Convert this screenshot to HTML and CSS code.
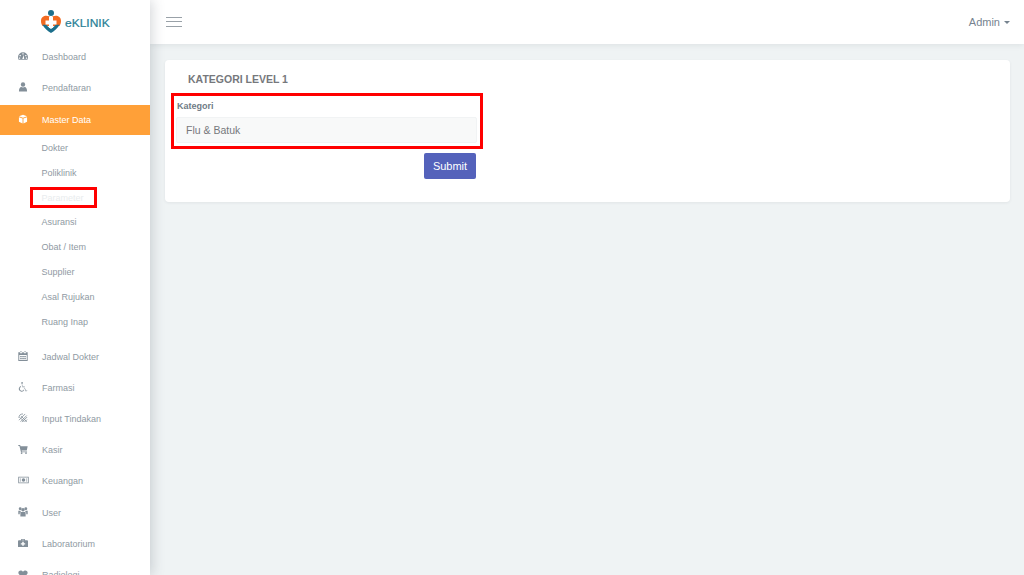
FILE: index.html
```html
<!DOCTYPE html>
<html lang="id">
<head>
<meta charset="utf-8">
<title>eKlinik</title>
<link rel="stylesheet" href="styles.css">
</head>
<body>
<div class="app">
  <aside class="sidebar">
    <div class="brand">
      <svg class="brand-mark" viewBox="0 0 20 23" width="20" height="23">
        <circle cx="10" cy="3" r="3" fill="#1c6f8c"/>
        <path d="M10 8C7.500 4.500 0 5 0 11c0 2 .6 3.600 1.600 5h16.800c1-1.400 1.600-3 1.600-5 0-6-7.500-6.500-10-3z" fill="#f26a21"/>
        <path d="M1.400 14.800C3.400 18.300 6.800 21.200 10 23c3.200-1.800 6.600-4.700 8.600-8.200h-3.800c-1.200 1.500-3 3-4.800 4.100-1.800-1.100-3.600-2.600-4.800-4.100z" fill="#1c6f8c"/>
        <path d="M8 7h4v3.500h3.500V14.500H12V18H8v-3.500H4.500V10.500H8z" fill="#fff"/>
      </svg>
      <span class="brand-name">eKLINIK</span>
    </div>
    <nav class="nav">
      <a class="nav-item"><svg class="nav-icon" viewBox="0 0 16 16"><path d="M8 2A8 8 0 0 0 0 10c0 1.500.4 2.800 1 4h14c.6-1.200 1-2.500 1-4a8 8 0 0 0-8-8zM7 3.500h2v2H7zM2.500 6.500h2v2h-2zm9 0h2v2h-2zM1.500 10.500h2v2h-2zm11 0h2v2h-2zM6.800 12.800l2.400-6.300.7 6.300z" fill-rule="evenodd"/></svg><span>Dashboard</span></a>
      <a class="nav-item"><svg class="nav-icon" viewBox="0 0 16 16"><circle cx="8" cy="4" r="3.500"/><path d="M1.500 15c0-4.500 1.500-6.800 3.800-7 1.500 1 3.900 1 5.400 0 2.300.2 3.800 2.500 3.800 7z"/></svg><span>Pendaftaran</span></a>
      <a class="nav-item active"><svg class="nav-icon" viewBox="0 0 16 16"><path d="M8 1 1.500 3.500 8 6l6.500-2.500zM1.500 5v7.500L7.300 15V7.300zm13 0L8.700 7.300V15l5.800-2.500z"/></svg><span>Master Data</span></a>
      <div class="subnav">
        <a class="sub-item">Dokter</a>
        <a class="sub-item">Poliklinik</a>
        <a class="sub-item current">Parameter</a>
        <a class="sub-item">Asuransi</a>
        <a class="sub-item">Obat / Item</a>
        <a class="sub-item">Supplier</a>
        <a class="sub-item">Asal Rujukan</a>
        <a class="sub-item">Ruang Inap</a>
      </div>
      <a class="nav-item"><svg class="nav-icon" viewBox="0 0 16 16"><path d="M4 0h1.500v2H4zm6.500 0H12v2h-1.500zM.5 2h2.800v1.500h3.400V2h2.600v1.500h3.400V2h2.800v14H.5zM2 6.500V14.500h12V6.500z" fill-rule="evenodd"/><path d="M3.500 8h2.500v2H3.500zm3.300 0h2.500v2H6.800zm3.200 0h2.500v2H10zM3.500 11h2.500v2H3.500zm3.300 0h2.500v2H6.800zm3.200 0h2.500v2H10z"/></svg><span>Jadwal Dokter</span></a>
      <a class="nav-item"><svg class="nav-icon" viewBox="0 0 16 16"><circle cx="6.500" cy="1.500" r="1.400"/><path d="M5.800 3.800h1.300v3.500h3.700v1.200H7zM4.800 6.500v1.300A3.300 3.300 0 1 0 9.300 12l.6 1.200A4.600 4.600 0 1 1 4.800 6.500zM10.800 9l2.200 4.800 1.500-.7.400.9-2.400 1.200L10 9.500z"/></svg><span>Farmasi</span></a>
      <a class="nav-item"><svg class="nav-icon" viewBox="0 0 16 16"><g class="lines" fill="none" stroke-width="1.300"><path d="M1.500 8A6.500 6.500 0 0 1 8 1.500M1.500 11.500 11.500 1.500M4 14 14 4M6.500 14.500l8-8M11 14l3.500-3.500M5 5l9 9M3 7l7 7"/></g></svg><span>Input Tindakan</span></a>
      <a class="nav-item"><svg class="nav-icon" viewBox="0 0 16 16"><path d="M.5 1.500h3l.5 2h11.500l-1.500 7H5.800l.3 1.300h8.400v1.400H4.800L2.300 3H.5z"/><circle cx="5.800" cy="14.500" r="1.400"/><circle cx="12.800" cy="14.500" r="1.400"/></svg><span>Kasir</span></a>
      <a class="nav-item"><svg class="nav-icon wide" viewBox="0 0 20 16"><path d="M.5 2h19v12H.5zM2 3.500v9h16v-9z" fill-rule="evenodd"/><circle cx="10" cy="8" r="3.200"/><path d="M3.500 5h2v6h-2zm11 0h2v6h-2z" opacity=".5"/></svg><span>Keuangan</span></a>
      <a class="nav-item"><svg class="nav-icon" viewBox="0 0 16 16"><circle cx="3.500" cy="2.800" r="2.300"/><circle cx="12.500" cy="2.800" r="2.300"/><circle cx="8" cy="4.500" r="2.800"/><path d="M.5 5.800h3l1.500 2.700H2.800v3H.5zm15 0h-3L11 8.500h2.200v3h2.300zM3.800 8h8.400v7H3.800z"/></svg><span>User</span></a>
      <a class="nav-item"><svg class="nav-icon" viewBox="0 0 16 16"><path d="M5 3.500V1.500h6v2h3.500A1.500 1.500 0 0 1 16 5v9.500H0V5a1.500 1.500 0 0 1 1.500-1.500zM6.300 3.500h3.400V2.800H6.300zM6.800 6v2.300H4.500v2h2.300v2.200h2.400v-2.200h2.300v-2H9.200V6z" fill-rule="evenodd"/></svg><span>Laboratorium</span></a>
      <a class="nav-item"><svg class="nav-icon" viewBox="0 0 16 16"><path d="M8 15 1.500 8.500C-.5 6 1 2.500 4.300 2.500 6 2.500 7.200 3.500 8 4.500c.8-1 2-2 3.700-2 3.300 0 4.800 3.500 2.800 6z"/></svg><span>Radiologi</span></a>
    </nav>
  </aside>
  <div class="main">
    <header class="topbar">
      <button class="burger" aria-label="Menu"><i></i><i></i><i></i></button>
      <div class="user">Admin<span class="caret"></span></div>
    </header>
    <section class="content">
      <div class="card">
        <h2 class="card-title">KATEGORI LEVEL 1</h2>
        <form class="form">
          <label class="label" for="kat">Kategori</label>
          <input class="input" id="kat" value="Flu &amp; Batuk">
          <div class="actions"><button class="submit" type="button">Submit</button></div>
        </form>
      </div>
    </section>
  </div>
</div>
<div class="mark mark-menu"></div>
<div class="mark mark-form"></div>
</body>
</html>
```
FILE: styles.css
```css
* { box-sizing: border-box; }
html, body { margin: 0; height: 575px; overflow: hidden; }
body { font-family: "Liberation Sans", Arial, sans-serif; background: #eff3f4; color: #76838f; position: relative; }
.app { display: flex; height: 575px; overflow: hidden; }

.sidebar { width: 150px; flex: none; background: #fff; box-shadow: 2px 0 12px rgba(60, 70, 80, .22); position: relative; z-index: 2; }
.brand { height: 41.500px; padding: 10px 0 0 41px; display: flex; align-items: flex-start; gap: 4px; }
.brand-mark { display: block; flex: none; }
.brand-name { font-size: 10px; line-height: 10px; margin-top: 9px; font-weight: 400; -webkit-text-stroke: .2px #2a7f96; color: #2a7f96; transform: scaleX(1.2); transform-origin: left; }

.nav { display: flex; flex-direction: column; }
.nav-item { height: 31.200px; display: flex; align-items: center; padding-left: 18px; font-size: 9px; color: #8f9aa3; }
.nav-icon { width: 10px; height: 10px; margin-right: 14px; fill: #838f99; flex: none; margin-top: -2px; }
.nav-icon.wide { width: 11px; margin-right: 13px; }
.nav-icon .lines { stroke: #838f99; }
.nav-item.active { background: #ffa038; color: #fff; height: 30px; margin-top: 1px; }
.nav-item.active .nav-icon { fill: #fff; }
.subnav { display: flex; flex-direction: column; padding: .6px 0 6.800px; }
.sub-item { height: 24.860px; display: flex; align-items: center; padding-left: 41.500px; font-size: 9px; color: #8f9aa3; }
.sub-item.current { color: #e9ecee; }

.main { flex: 1; min-width: 0; display: flex; flex-direction: column; }
.topbar { height: 44px; flex: none; background: #fff; display: flex; align-items: center; justify-content: space-between; padding: 0 14px 0 16px; box-shadow: 0 1px 6px rgba(60, 70, 80, .1); position: relative; }
.burger { width: 16px; padding: 0; border: 0; background: none; display: flex; flex-direction: column; gap: 3.500px; margin-bottom: 1px; }
.burger i { display: block; height: 1px; background: #99a1a8; }
.user { font-size: 11px; color: #76838f; display: flex; align-items: center; }
.caret { width: 0; height: 0; margin-left: 4px; border-left: 3.500px solid transparent; border-right: 3.500px solid transparent; border-top: 3.500px solid #76838f; }

.content { flex: 1; padding: 16px 14px 0 15px; }
.card { height: 141.500px; background: #fff; border-radius: 4px; box-shadow: 0 1px 3px rgba(60, 70, 80, .08); padding: 13px 0 0 11px; }
.card-title { margin: 0 0 0 12px; font-size: 10.500px; line-height: 12px; font-weight: 700; color: #76787c; }
.form { width: 301px; padding-top: 16px; display: flex; flex-direction: column; }
.label { font-size: 9px; line-height: 10px; font-weight: 700; color: #6f7b86; margin: 0 0 6px 1px; }
.input { height: 26px; width: 301px; border: 1px solid #f1f3f4; border-radius: 2px; background: #f8f9f9; padding: 0 9px; font: 10.500px "Liberation Sans", Arial, sans-serif; color: #76787c; outline: 0; }
.actions { display: flex; justify-content: flex-end; padding-top: 10px; padding-right: 1px; }
.submit { width: 52px; height: 26px; border: 0; border-radius: 2px; background: #5462bb; color: #fff; font: 11px "Liberation Sans", Arial, sans-serif; padding: 0; }

.mark { position: absolute; border: 3px solid #ff0000; z-index: 5; }
.mark-menu { left: 30px; top: 187px; width: 67px; height: 21px; }
.mark-form { left: 171px; top: 93px; width: 312px; height: 56px; }
```
